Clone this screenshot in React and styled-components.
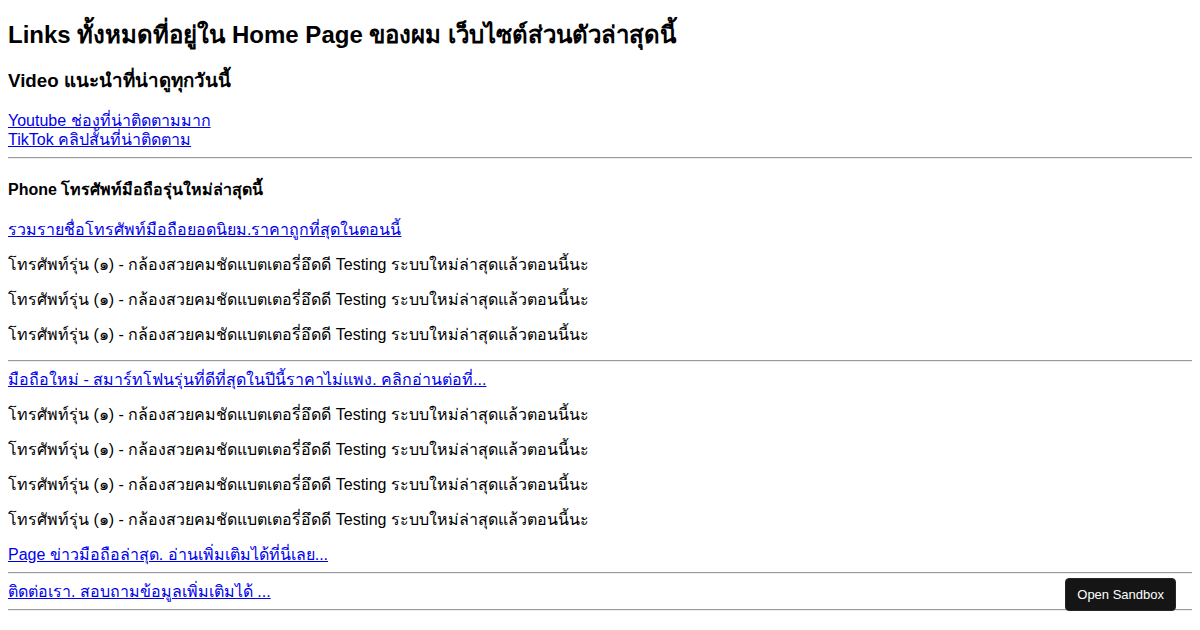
import React from 'react';
import styled, { createGlobalStyle } from 'styled-components';

const GlobalStyle = createGlobalStyle`
    body {
        margin: 8px;
        font-family: "Liberation Sans", Arial, sans-serif;
        font-size: 16px;
        line-height: 19px;
        background: #fff;
        color: #000;
    }
`

const videoLinks = [
    'Youtube ช่องที่น่าติดตามมาก',
    'TikTok คลิปสั้นที่น่าติดตาม',
];

const phoneItem = 'โทรศัพท์รุ่น (๑) - กล้องสวยคมชัดแบตเตอรี่อึดดี Testing ระบบใหม่ล่าสุดแล้วตอนนี้นะ';

const phoneGroups = [
    {
        title: 'รวมรายชื่อโทรศัพท์มือถือยอดนิยม.ราคาถูกที่สุดในตอนนี้',
        items: 3,
        divider: true,
    },
    {
        title: 'มือถือใหม่ - สมาร์ทโฟนรุ่นที่ดีที่สุดในปีนี้ราคาไม่แพง. คลิกอ่านต่อที่...',
        items: 4,
        divider: false,
    },
];

function App() {
    return(
        <>
        <GlobalStyle/>
        <Title>Links ทั้งหมดที่อยู่ใน Home Page ของผม เว็บไซต์ส่วนตัวล่าสุดนี้</Title>
        <Section>Video แนะนำที่น่าดูทุกวันนี้</Section>
        <LinkList>
            {videoLinks.map(title => (
                <Link href='#' key={title}>{title}</Link>
            ))}
        </LinkList>
        <Divider/>
        <SubTitle>Phone โทรศัพท์มือถือรุ่นใหม่ล่าสุดนี้</SubTitle>
        {phoneGroups.map(group => (
            <div key={group.title}>
                <LinkLine><Link href='#'>{group.title}</Link></LinkLine>
                {Array.from({ length: group.items }).map((_, i) => (
                    <Item key={i}>{phoneItem}</Item>
                ))}
                {group.divider ? <Divider/> : null}
            </div>
        ))}
        <LinkLine><Link href='#'>Page ข่าวมือถือล่าสุด. อ่านเพิ่มเติมได้ที่นี่เลย...</Link></LinkLine>
        <Divider/>
        <LinkLine><Link href='#'>ติดต่อเรา. สอบถามข้อมูลเพิ่มเติมได้ ...</Link></LinkLine>
        <Divider/>
        <SandboxButton>Open Sandbox</SandboxButton>
        </>
    )
}

export default App;

const Title = styled.h2`
    font-size: 24px;
    line-height: 28px;
    font-weight: bold;
    margin: 13px 0 21px;
`

const Section = styled.h3`
    font-size: 18.72px;
    line-height: 22px;
    font-weight: bold;
    margin: 21px 0 18.5px;
`

const SubTitle = styled.h4`
    font-size: 16px;
    line-height: 19px;
    font-weight: bold;
    margin: 21px 0;
`

const LinkList = styled.div`
    display: flex;
    flex-direction: column;
    align-items: flex-start;
`

const LinkLine = styled.div`
    margin: 0;
`

const Link = styled.a`
    color: #0000ee;
    text-decoration: underline;
`

const Item = styled.p`
    margin: 16px 0;
`

const Divider = styled.hr`
    margin: 8px 0;
    border: none;
    border-top: 1px solid #9a9a9a;
    border-bottom: 1px solid #eeeeee;
`

const SandboxButton = styled.button`
    position: fixed;
    right: 24px;
    bottom: 19px;
    height: 33px;
    padding: 0 11px;
    border: 1px solid #262626;
    border-radius: 4px;
    background: #151515;
    color: #fff;
    font-family: "Liberation Sans", Arial, sans-serif;
    font-size: 13px;
    cursor: pointer;
`
